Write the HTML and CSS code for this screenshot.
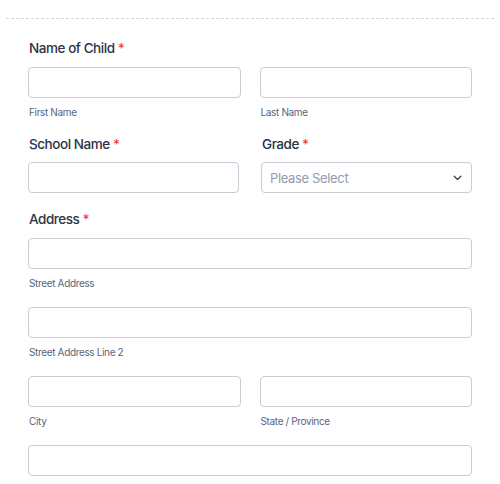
FILE: index.html
```html
<!DOCTYPE html>
<html lang="en">
<head>
    <meta charset="UTF-8">
    <meta name="viewport" content="width=device-width, initial-scale=1.0">
    <title>Registration Form</title>
    <link rel="stylesheet" href="styles.css">
</head>
<body>
    <div class="page-break"></div>

    <form class="form-card">
        <div class="field">
            <label class="field-label">Name of Child <span class="req">*</span></label>
            <div class="row row-name">
                <div class="sub-field">
                    <input class="text-input" type="text">
                    <span class="sub-label">First Name</span>
                </div>
                <div class="sub-field">
                    <input class="text-input" type="text">
                    <span class="sub-label">Last Name</span>
                </div>
            </div>
        </div>

        <div class="row row-school">
            <div class="field">
                <label class="field-label">School Name <span class="req">*</span></label>
                <input class="text-input" type="text">
            </div>
            <div class="field">
                <label class="field-label">Grade <span class="req">*</span></label>
                <div class="select-wrap">
                    <select class="select-input">
                        <option>Please Select</option>
                    </select>
                    <svg class="chevron" width="9" height="6" viewBox="0 0 9 6">
                        <path d="M1.2 1.3 L4.5 4.5 L7.8 1.3" fill="none" stroke="#3d4659" stroke-width="1.4" stroke-linecap="round" stroke-linejoin="round"/>
                    </svg>
                </div>
            </div>
        </div>

        <div class="field">
            <label class="field-label">Address <span class="req">*</span></label>
            <div class="sub-field">
                <input class="text-input" type="text">
                <span class="sub-label">Street Address</span>
            </div>
            <div class="sub-field">
                <input class="text-input" type="text">
                <span class="sub-label">Street Address Line 2</span>
            </div>
            <div class="row row-name">
                <div class="sub-field">
                    <input class="text-input" type="text">
                    <span class="sub-label">City</span>
                </div>
                <div class="sub-field">
                    <input class="text-input" type="text">
                    <span class="sub-label">State / Province</span>
                </div>
            </div>
            <div class="sub-field">
                <input class="text-input" type="text">
            </div>
        </div>
    </form>
</body>
</html>
```

FILE: styles.css
```css
body {
    margin: 0;
    background: #fff;
    font-family: Inter, "Noto Sans", Arial, sans-serif;
    color: #2c3345;
}
.page-break {
    margin: 18px 6px 0 6px;
    border-top: 1px dashed #d5d8e0;
}
.form-card {
    padding: 19px 28px 0 28px;
}
.field {
    display: flex;
    flex-direction: column;
    margin-bottom: 15px;
}
.field-label {
    font-size: 13.5px;
    font-weight: 500;
    letter-spacing: -0.45px;
    line-height: 20px;
    margin-bottom: 9px;
    padding-left: 1px;
}
.req {
    color: #f23a3c;
}
.row {
    display: grid;
    grid-template-columns: 1fr 1fr;
}
.row-name {
    column-gap: 19px;
}
.row-school {
    column-gap: 22px;
}
.row-school .field {
    margin-bottom: 16px;
}
.row-school .field-label {
    margin-bottom: 8px;
}
.sub-field {
    display: flex;
    flex-direction: column;
    margin-bottom: 17px;
}
.field > .sub-field:last-child {
    margin-bottom: 0;
}
.field > .row-name .sub-field {
    margin-bottom: 0;
}
.field > .row-name {
    margin-bottom: 17px;
}
.field:first-child > .row-name {
    margin-bottom: 0;
}
.text-input,
.select-input {
    box-sizing: border-box;
    width: 100%;
    height: 31px;
    margin: 0;
    border: 1px solid #c8ccd7;
    border-radius: 4px;
    background: #fff;
    font-family: inherit;
    font-size: 14px;
    outline: none;
}
.sub-label {
    font-size: 10px;
    letter-spacing: -0.35px;
    line-height: 14px;
    color: #57647e;
    margin-top: 7px;
    padding-left: 1px;
}
.select-wrap {
    position: relative;
}
.select-input {
    appearance: none;
    -webkit-appearance: none;
    padding: 0 30px 0 8px;
    font-size: 13px;
    letter-spacing: -0.35px;
    color: #929aab;
}
.chevron {
    position: absolute;
    right: 10px;
    top: 13px;
    pointer-events: none;
}
```
